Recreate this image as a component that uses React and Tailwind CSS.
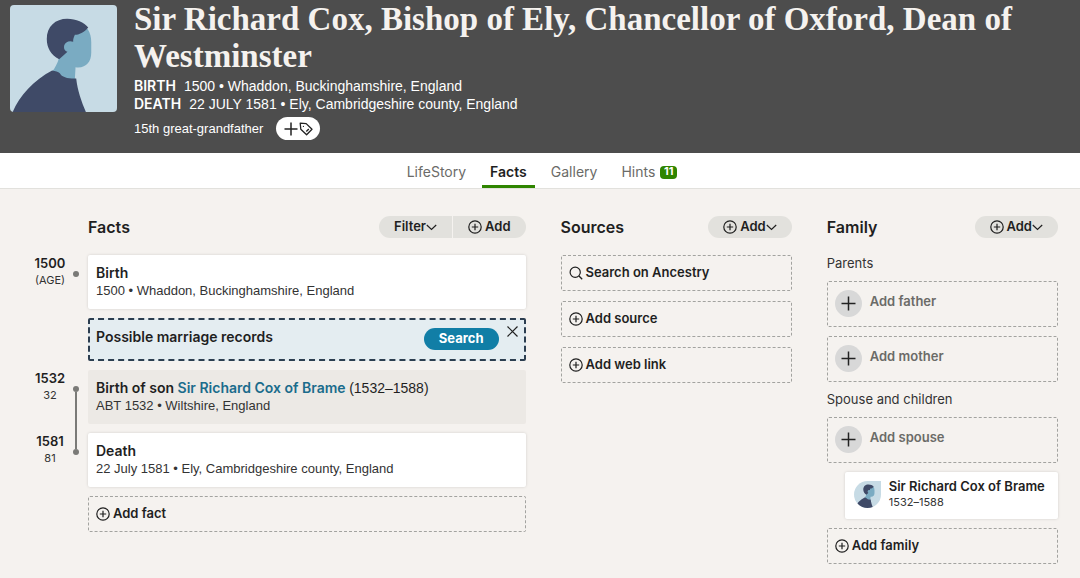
import React from "react";

const facts = [
  {
    year: "1500",
    age: "(AGE)",
    title: "Birth",
    detail: "1500 • Whaddon, Buckinghamshire, England",
  },
  { hint: "Possible marriage records" },
  {
    year: "1532",
    age: "32",
    title: "Birth of son",
    link: "Sir Richard Cox of Brame",
    years: "(1532–1588)",
    detail: "ABT 1532 • Wiltshire, England",
    muted: true,
    lineBelow: true,
  },
  {
    year: "1581",
    age: "81",
    title: "Death",
    detail: "22 July 1581 • Ely, Cambridgeshire county, England",
    lineAbove: true,
  },
];

function Avatar({ className }) {
  return (
    <svg viewBox="0 0 320 320" className={className} aria-hidden="true">
      <rect width="320" height="320" fill="#c7dbe5" />
      <path
        d="M146 160C142 174 136 186 127 198L150 222H194L196 186C226 190 243 172 243 142V112C243 96 240 84 232 72L170 70L140 120Z"
        fill="#7aabc2"
      />
      <path
        d="M147 162C122 150 110 128 110 102C110 64 136 41 171 41C198 41 222 52 234 67C222 82 206 89 194 89C191 96 188 102 189 110C178 105 165 110 162 121C160 132 165 138 172 140Z"
        fill="#3f4a67"
      />
      <path
        d="M8 320C28 272 72 224 126 196C136 198 144 200 149 204C155 216 174 221 198 220C202 256 214 290 227 320Z"
        fill="#3f4a67"
      />
    </svg>
  );
}

function PlusCircle() {
  return (
    <svg viewBox="0 0 14 14" className="h-3.5 w-3.5 shrink-0" fill="none" stroke="currentColor" aria-hidden="true">
      <circle cx="7" cy="7" r="6.2" strokeWidth="1.2" />
      <path d="M7 3.8V10.2M3.8 7H10.2" strokeWidth="1.2" />
    </svg>
  );
}

function Chevron() {
  return (
    <svg viewBox="0 0 11 14" className="h-3.5 w-[11px] shrink-0" fill="none" stroke="currentColor" aria-hidden="true">
      <path d="M0.8 5L5.5 9.5L10.2 5" strokeWidth="1.2" />
    </svg>
  );
}

function SearchIcon() {
  return (
    <svg viewBox="0 0 14 14" className="h-3.5 w-3.5 shrink-0" fill="none" stroke="currentColor" aria-hidden="true">
      <circle cx="6.2" cy="6.2" r="5.1" strokeWidth="1.2" />
      <path d="M10 10L13.2 13.2" strokeWidth="1.3" />
    </svg>
  );
}

function AddMenu() {
  return (
    <button className="flex h-[22px] items-center gap-[3px] rounded-full bg-[#e2e1dd] px-[15px] text-[13px] font-semibold">
      <PlusCircle />
      <span className="flex items-center">
        Add
        <Chevron />
      </span>
    </button>
  );
}

function DashedButton({ icon, children }) {
  return (
    <button className="flex h-9 w-full items-center gap-[3px] rounded-xs border border-dashed border-[#a3a3a0] px-[7px] text-left text-[13px] font-semibold">
      {icon || <PlusCircle />}
      {children}
    </button>
  );
}

function AddPerson({ children }) {
  return (
    <button className="mb-[9px] flex h-[46px] w-full items-start gap-2 rounded-xs border border-dashed border-[#a3a3a0] px-[7px] pt-2 text-left text-[13px] font-semibold text-[#6b6b68]">
      <span className="flex h-[27px] w-[27px] items-center justify-center rounded-full bg-[#d8d8d8] text-[#222]">
        <svg viewBox="0 0 15 15" className="h-[15px] w-[15px]" stroke="currentColor" aria-hidden="true">
          <path d="M7.5 0.5V14.5M0.5 7.5H14.5" strokeWidth="1.5" />
        </svg>
      </span>
      <span className="leading-[22px]">{children}</span>
    </button>
  );
}

function FactRow({ fact }) {
  return (
    <li className="flex">
      <div className="w-9 shrink-0 text-center">
        <p className="text-[13px] leading-[17px] font-semibold">{fact.year}</p>
        <p className="text-[11px] leading-[17px] text-[#333]">{fact.age}</p>
      </div>
      <div className="mr-1 flex w-4 shrink-0 flex-col items-center">
        <span className={`h-4 w-[2px] ${fact.lineAbove ? "bg-[#7a7a77]" : ""}`} />
        <span className="h-1.5 w-1.5 rounded-full bg-[#7a7a77]" />
        <span className={`w-[2px] flex-1 ${fact.lineBelow ? "bg-[#7a7a77]" : ""}`} />
      </div>
      <article
        className={`mb-[9px] h-[54px] flex-1 rounded-xs px-2 pt-[9px] ${
          fact.muted ? "bg-[#ece9e5]" : "bg-white shadow-[0_0_3px_rgba(0,0,0,0.15)]"
        }`}
      >
        <h3 className="text-sm leading-[18px] font-semibold">
          {fact.title}{" "}
          {fact.link && (
            <a href="#son" className="text-[#1b6c8c]">
              {fact.link}
            </a>
          )}{" "}
          <span className="font-['Liberation_Sans',sans-serif] font-normal">{fact.years}</span>
        </h3>
        <p className="font-['Liberation_Sans',sans-serif] text-[13px] leading-[17px] text-[#333]">
          {fact.detail}
        </p>
      </article>
    </li>
  );
}

function HintRow({ text }) {
  return (
    <li className="mb-[9px] ml-14 flex h-[43px] items-start rounded-xs border-2 border-dashed border-[#2c3e50] bg-[#e4edf1] px-1.5">
      <p className="mt-2 flex-1 text-sm leading-[18px] font-semibold">{text}</p>
      <button className="mt-2 h-[22px] rounded-full bg-[#117ea6] px-[15px] text-[13px] font-bold text-white">
        Search
      </button>
      <button aria-label="Dismiss" className="mt-1.5 ml-2">
        <svg viewBox="0 0 11 11" className="h-[11px] w-[11px]" stroke="#222" aria-hidden="true">
          <path d="M0.5 0.5L10.5 10.5M10.5 0.5L0.5 10.5" strokeWidth="1.2" />
        </svg>
      </button>
    </li>
  );
}

function App() {
  return (
    <div className="min-h-screen bg-[#f5f2ef] font-['Inter',sans-serif] text-[#1f1f1f]">
      {/* Header */}
      <header className="flex gap-[17px] bg-[#4d4d4d] pt-[5px] pr-4 pb-[13px] pl-2.5 text-white">
        <Avatar className="h-[107px] w-[107px] shrink-0 rounded-sm" />
        <div className="font-['Liberation_Sans',sans-serif]">
          <h1 className="-mt-1 font-['Liberation_Serif',serif] text-[33px] leading-[37px] font-bold text-[#f5f2ef]">
            Sir Richard Cox, Bishop of Ely, Chancellor of Oxford, Dean of
            Westminster
          </h1>
          <p className="mt-0.5 text-sm leading-[18px]">
            <b className="mr-2 font-['Inter',sans-serif] font-semibold">BIRTH</b>
            1500 • Whaddon, Buckinghamshire, England
          </p>
          <p className="text-sm leading-[18px]">
            <b className="mr-2 font-['Inter',sans-serif] font-semibold">DEATH</b>
            22 JULY 1581 • Ely, Cambridgeshire county, England
          </p>
          <div className="mt-1 flex items-center gap-[13px] text-[13px]">
            15th great-grandfather
            <button
              aria-label="Add tag"
              className="flex h-[23px] w-[44px] items-center justify-center gap-[1px] rounded-full bg-white text-[#222]"
            >
              <svg viewBox="0 0 14 14" className="h-3.5 w-3.5" stroke="currentColor" aria-hidden="true">
                <path d="M7 0.5V13.5M0.5 7H13.5" strokeWidth="1.5" />
              </svg>
              <svg viewBox="0 0 14 14" className="h-3.5 w-3.5" fill="none" stroke="currentColor" strokeWidth="1.3" aria-hidden="true">
                <path d="M1.2 1.2L7.2 1.6L13 7.3L7.6 12.8L1.8 7.2Z" strokeLinejoin="round" />
                <path d="M7.3 9.5L9.8 7" />
                <circle cx="4.4" cy="4.4" r="0.6" fill="currentColor" stroke="none" />
              </svg>
            </button>
          </div>
        </div>
      </header>

      {/* Tabs */}
      <nav className="flex h-9 justify-center gap-2 border-b border-[#e2e1dd] bg-white pl-1 text-sm text-[#6b6b68]">
        <a href="#lifestory" className="flex items-center border-b-3 border-transparent px-2 pt-1.5">
          LifeStory
        </a>
        <a href="#facts" className="flex items-center border-b-3 border-[#2f8500] px-2 pt-1.5 font-semibold text-[#1f1f1f]">
          Facts
        </a>
        <a href="#gallery" className="flex items-center border-b-3 border-transparent px-2 pt-1.5">
          Gallery
        </a>
        <a href="#hints" className="flex items-center gap-[5px] border-b-3 border-transparent px-2 pt-1.5">
          Hints
          <span className="flex h-[13px] w-[17px] items-center justify-center rounded-sm bg-[#2f8500] text-[11px] font-bold text-white">
            11
          </span>
        </a>
      </nav>

      <main className="grid grid-cols-[493fr_231fr_231fr] gap-[35px] pt-[27px] pr-[22px] pb-3.5 pl-8">
        {/* Facts */}
        <section>
          <div className="mb-[17px] ml-14 flex h-[22px] items-center justify-between">
            <h2 className="text-base leading-5 font-semibold">Facts</h2>
            <div className="flex gap-[1px] text-[13px] font-semibold">
              <button className="flex h-[22px] items-center rounded-l-full bg-[#e2e1dd] px-[15px]">
                Filter
                <Chevron />
              </button>
              <button className="flex h-[22px] items-center gap-[3px] rounded-r-full bg-[#e2e1dd] px-[15px]">
                <PlusCircle />
                Add
              </button>
            </div>
          </div>
          <ul>
            {facts.map((fact) =>
              fact.hint ? (
                <HintRow key={fact.hint} text={fact.hint} />
              ) : (
                <FactRow key={fact.year} fact={fact} />
              )
            )}
          </ul>
          <div className="ml-14">
            <DashedButton>Add fact</DashedButton>
          </div>
        </section>

        {/* Sources */}
        <section>
          <div className="mb-[17px] flex h-[22px] items-center justify-between">
            <h2 className="text-base leading-5 font-semibold">Sources</h2>
            <AddMenu />
          </div>
          <div className="flex flex-col gap-2.5">
            <DashedButton icon={<SearchIcon />}>Search on Ancestry</DashedButton>
            <DashedButton>Add source</DashedButton>
            <DashedButton>Add web link</DashedButton>
          </div>
        </section>

        {/* Family */}
        <section>
          <div className="mb-[17px] flex h-[22px] items-center justify-between">
            <h2 className="text-base leading-5 font-semibold">Family</h2>
            <AddMenu />
          </div>
          <h3 className="mb-[9px] text-[13px] leading-[17px] text-[#333]">Parents</h3>
          <AddPerson>Add father</AddPerson>
          <AddPerson>Add mother</AddPerson>
          <h3 className="mb-[9px] text-[13px] leading-[17px] text-[#333]">
            Spouse and children
          </h3>
          <AddPerson>Add spouse</AddPerson>
          <a
            href="#son"
            className="mb-[9px] ml-[18px] flex h-[47px] items-start gap-2 rounded-xs bg-white px-[9px] pt-1.5 shadow-[0_0_3px_rgba(0,0,0,0.15)]"
          >
            <Avatar className="mt-[3px] h-[27px] w-[27px] shrink-0 rounded-full rounded-tr-none" />
            <span>
              <span className="block text-[13px] leading-[17px] font-semibold whitespace-nowrap">
                Sir Richard Cox of Brame
              </span>
              <span className="block text-[11px] leading-[15px] text-[#333]">1532–1588</span>
            </span>
          </a>
          <DashedButton>Add family</DashedButton>
        </section>
      </main>
    </div>
  );
}

export default App;
